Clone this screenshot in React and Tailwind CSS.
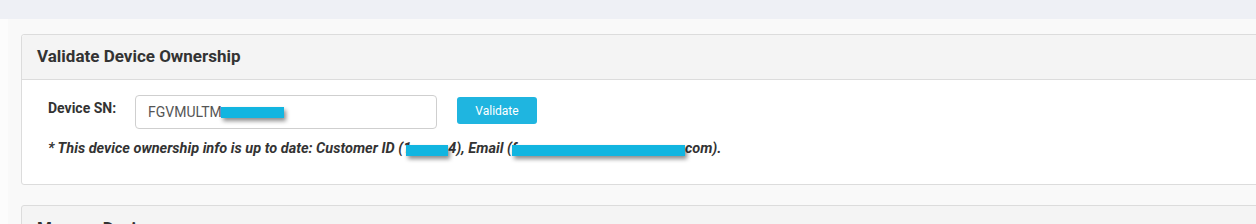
import React, { useState } from "react";

function Redact({ w, className = "" }) {
    // cyan marker over private data
    return (
        <span
            className={"relative inline-block h-[11px] bg-[#12b5e0] align-middle shadow-[2px_3px_4px_rgba(0,0,0,0.45)] " + className}
            style={{ width: w }}
        />
    );
}

export default function App() {
    const [sn, setSn] = useState("FGVMULTM");

    return (
        <div className="h-[224px] w-[1256px] overflow-hidden bg-[#f9f9f9] font-['Roboto',sans-serif] text-[#333]">
            <div className="h-[19px] bg-[#eef0f5]" />
            <div className="flex">
                <div className="w-[8px] shrink-0 bg-[#fcfcfc]" />
                <div className="flex-1 pl-[13px] pt-[15px]">
                    {/* Validate card */}
                    <div className="-mr-[10px] rounded-[3px] border border-[#dcdcdc] bg-white">
                        <div className="flex h-[45px] items-center border-b border-[#dcdcdc] bg-[#f4f4f4] px-[15px] rounded-t-[3px]">
                            <h3 className="text-[17px] font-bold text-[#333]">Validate Device Ownership</h3>
                        </div>
                        <div className="px-[26px] pt-[15px] pb-[24px]">
                            <div className="flex items-start">
                                <label className="w-[87px] pt-[3px] text-[14px] font-bold text-[#333]">Device SN:</label>
                                <div className="relative flex h-[34px] w-[302px] items-center rounded-[4px] border border-[#cfcfcf] bg-white px-[12px]">
                                    <input
                                        value={sn}
                                        onChange={e => setSn(e.target.value)}
                                        className="w-[74px] bg-transparent text-[14px] text-[#555] outline-none"
                                    />
                                    <Redact w={63} className="-ml-[1px] mt-[1px]" />
                                </div>
                                <button className="ml-[20px] mt-[2px] h-[27px] w-[80px] rounded-[3px] bg-[#1fb5e0] text-[12px] text-white">
                                    Validate
                                </button>
                            </div>
                            <p className="mt-[9px] text-[14.5px] font-bold italic text-[#333]">
                                * This device ownership info is up to date: Customer ID (1<Redact w={42} className="-ml-[5px] mt-[2px]" />4), Email (f<Redact w={173} className="-ml-[5px] mt-[2px]" />com).
                            </p>
                        </div>
                    </div>
                    {/* Manage card */}
                    <div className="-mr-[10px] mt-[20px] rounded-[3px] border border-[#dcdcdc] bg-[#f4f4f4]">
                        <div className="flex h-[45px] items-center px-[15px]">
                            <h3 className="text-[17px] font-bold text-[#333]">Manage Device</h3>
                        </div>
                    </div>
                </div>
            </div>
        </div>
    );
}
